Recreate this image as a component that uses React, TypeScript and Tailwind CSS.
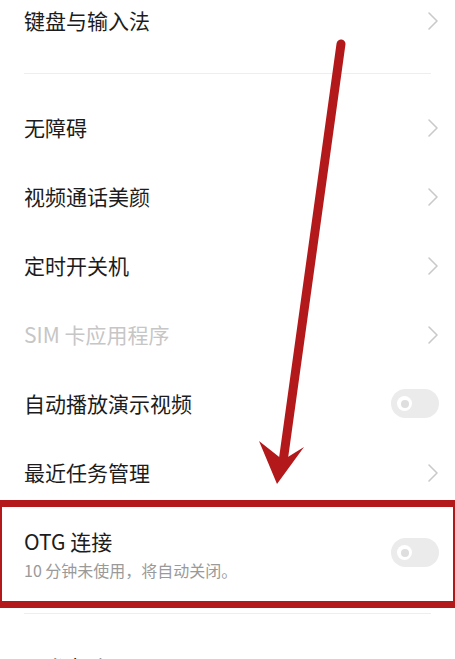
import { ReactNode } from "react";

const FONT = { fontFamily: '"Noto Sans CJK SC", "Noto Sans", sans-serif' };

function Chevron() {
  return (
    <svg width="12" height="20" viewBox="0 0 12 20" className="shrink-0">
      <polyline
        points="2,2 10,10 2,18"
        fill="none"
        stroke="#c9c9c9"
        strokeWidth="1.6"
        strokeLinecap="round"
        strokeLinejoin="round"
      />
    </svg>
  );
}

function Toggle() {
  return (
    <div className="flex h-[29px] w-[48px] shrink-0 items-center rounded-full bg-[#ebebeb] pl-[6px]">
      <div className="flex h-[15px] w-[15px] items-center justify-center rounded-full bg-white">
        <div className="h-[8px] w-[8px] rounded-full bg-[#dedede]" />
      </div>
    </div>
  );
}

function Row({
  title,
  right,
  muted,
}: {
  title: string;
  right: ReactNode;
  muted?: boolean;
}) {
  return (
    <div className="flex h-[69px] items-center justify-between pl-6 pr-[16px]">
      <span
        className={`text-[21px] leading-none ${muted ? "text-[#c6c6c6]" : "text-[#1c1c1c]"}`}
      >
        {title}
      </span>
      {right}
    </div>
  );
}

function Divider() {
  return <div className="mx-6 h-px bg-[#eeeeee]" />;
}

export default function App() {
  return (
    <div className="relative h-[659px] w-[455px] overflow-hidden bg-white" style={FONT}>
      <div className="-mt-[14px] flex flex-col">
        <Row title="键盘与输入法" right={<Chevron />} />
        <div className="h-[18px]" />
        <Divider />
        <div className="h-[19px]" />
        <Row title="无障碍" right={<Chevron />} />
        <Row title="视频通话美颜" right={<Chevron />} />
        <Row title="定时开关机" right={<Chevron />} />
        <Row title="SIM 卡应用程序" right={<Chevron />} muted />
        <Row title="自动播放演示视频" right={<Toggle />} />
        <Row title="最近任务管理" right={<Chevron />} />

        <div className="flex h-[91px] items-center justify-between pl-6 pr-[16px]">
          <div className="flex flex-col gap-[10px] pt-[3px]">
            <span className="text-[21px] leading-none text-[#1c1c1c]">OTG 连接</span>
            <span className="text-[16px] leading-none text-[#9a9a9a]">
              10 分钟未使用，将自动关闭。
            </span>
          </div>
          <Toggle />
        </div>

        <div className="h-[15px]" />
        <Divider />
        <div className="h-[19px]" />
        <Row title="开发者选项" right={<Chevron />} />
      </div>

      {/* annotation box */}
      <div className="pointer-events-none absolute left-0 top-[500px] h-[108px] w-[455px] border-x-2 border-y-[7px] border-[#b3191a]" />

      {/* annotation arrow */}
      <svg
        className="pointer-events-none absolute left-0 top-0"
        width="455"
        height="659"
        viewBox="0 0 455 659"
      >
        <line
          x1="341"
          y1="44"
          x2="283"
          y2="462"
          stroke="#b3191a"
          strokeWidth="9"
          strokeLinecap="round"
        />
        <polygon points="277,484 259,441 283,460 304,447" fill="#b3191a" />
      </svg>
    </div>
  );
}
